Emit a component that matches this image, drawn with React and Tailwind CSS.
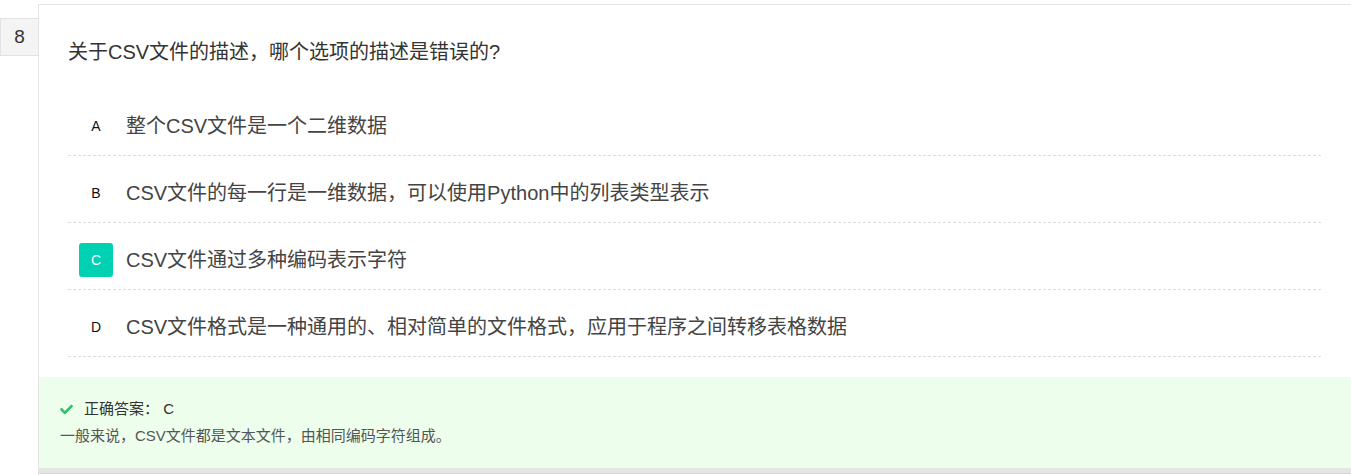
import React from 'react';
import { FaCheck } from 'react-icons/fa';

const options = [
  { key: 'A', text: '整个CSV文件是一个二维数据' },
  { key: 'B', text: 'CSV文件的每一行是一维数据，可以使用Python中的列表类型表示' },
  { key: 'C', text: 'CSV文件通过多种编码表示字符', chosen: true },
  { key: 'D', text: 'CSV文件格式是一种通用的、相对简单的文件格式，应用于程序之间转移表格数据' },
];

function Option({ item }) {
  return (
    <li className="flex items-center pt-[20px] pb-[12px] border-b border-dashed border-[#dcdcdc]">
      <span
        className={
          'w-[34px] h-[34px] flex items-center justify-center rounded-[3px] text-[14px] ml-[11px] ' +
          (item.chosen ? 'bg-[#00d1b2] text-white' : 'text-[#111]')
        }
      >
        {item.key}
      </span>
      <span className="ml-[13px] text-[20px] leading-[28px] text-[#444]">{item.text}</span>
    </li>
  );
}

export default function App() {
  return (
    <div
      className="flex bg-white w-[1351px] h-[475px] overflow-hidden"
      style={{ fontFamily: '"Liberation Sans", "Noto Sans CJK SC", sans-serif' }}
    >
      <div className="mt-[18px] w-[38px] h-[38px] shrink-0 flex items-center justify-center bg-[#f4f4f4] border border-r-0 border-[#e2e2e2] text-[19px] text-[#333]">
        8
      </div>

      <div className="flex-1 mt-[4px] border-l border-t border-[#e4e4e4] flex flex-col">
        <div className="pt-[33px] pl-[29px] pr-[30px]">
          <h3 className="text-[20px] leading-[28px] text-[#333]">关于CSV文件的描述，哪个选项的描述是错误的?</h3>
          <ul className="mt-[23px]">
            {options.map((o) => (
              <Option key={o.key} item={o} />
            ))}
          </ul>
        </div>

        <div className="mt-[20px] bg-[#eefeec] pt-[22px] pb-[22px] pl-[21px]">
          <div className="flex items-center h-[20px] text-[15px] text-[#333]">
            <FaCheck className="text-[#2dc26b] w-[13px] h-[13px]" />
            <span className="ml-[11px]">正确答案： C</span>
          </div>
          <p className="mt-[7px] h-[20px] leading-[20px] text-[15px] text-[#555]">
            一般来说，CSV文件都是文本文件，由相同编码字符组成。
          </p>
        </div>
        <div className="h-[6px] bg-[#e5e5e5] border-b border-[#d8d8d8]" />
      </div>
    </div>
  );
}
